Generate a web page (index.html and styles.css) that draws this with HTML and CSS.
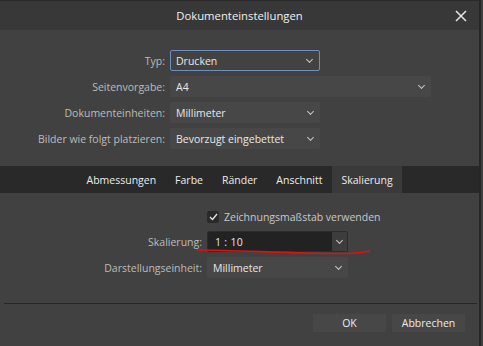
FILE: index.html
```html
<!DOCTYPE html>
<html lang="de">
<head>
  <meta charset="UTF-8" />
  <title>Dokumenteinstellungen</title>
  <link rel="stylesheet" href="styles.css">
</head>
<body>
  <div class="dialog">
    <div class="titlebar">
      <span class="title">Dokumenteinstellungen</span>
      <svg class="close" width="12" height="12" viewBox="0 0 12 12"><path d="M1 1L11 11M11 1L1 11" stroke="#e6e6e6" stroke-width="1.5"/></svg>
    </div>

    <div class="form top">
      <label>Typ:</label>
      <div class="field focus w150"><span>Drucken</span><i class="chev"></i></div>
      <label>Seitenvorgabe:</label>
      <div class="field w261"><span>A4</span><i class="chev"></i></div>
      <label>Dokumenteinheiten:</label>
      <div class="field w150"><span>Millimeter</span><i class="chev"></i></div>
      <label>Bilder wie folgt platzieren:</label>
      <div class="field w150"><span>Bevorzugt eingebettet</span><i class="chev"></i></div>
    </div>

    <div class="tabs">
      <span class="tab">Abmessungen</span>
      <span class="tab">Farbe</span>
      <span class="tab">Ränder</span>
      <span class="tab">Anschnitt</span>
      <span class="tab active">Skalierung</span>
    </div>

    <div class="form bottom">
      <span></span>
      <div class="check"><span class="box"><svg width="9" height="8" viewBox="0 0 9 8"><path d="M1 4L3.5 6.5L8 1" fill="none" stroke="#e6e6e6" stroke-width="1.3"/></svg></span>Zeichnungsmaßstab verwenden</div>
      <label>Skalierung:</label>
      <div class="field dark w141"><span class="scale">1 : 10</span><i class="btn"><i class="chev"></i></i></div>
      <label>Darstellungseinheit:</label>
      <div class="field w141"><span>Millimeter</span><i class="chev"></i></div>
      <svg class="redline" width="180" height="10" viewBox="0 0 180 10"><path d="M1 2C30 2 70 4 110 5S160 6 174 3" fill="none" stroke="#e01010" stroke-width="1.6"/></svg>
    </div>

    <div class="footer">
      <button class="button">OK</button>
      <button class="button">Abbrechen</button>
    </div>
  </div>
</body>
</html>
```

FILE: styles.css
```css
body {
  margin: 0;
  background: #404040;
  font-family: "Open Sans", "Noto Sans", sans-serif;
  font-size: 10.5px;
  color: #e8e8e8;
}

.dialog {
  width: 481px;
  height: 346px;
  background: #414141;
  border-right: 2px solid #262626;
  border-top: 1px solid #2a2a2a;
  box-sizing: border-box;
  position: relative;
}

.titlebar {
  height: 29px;
  background: #383838;
  display: flex;
  align-items: center;
  justify-content: center;
  position: relative;
}
.title {
  font-size: 11.3px;
  color: #f0f0f0;
}
.close {
  position: absolute;
  right: 12px;
  top: 9px;
}

.form {
  display: grid;
  align-items: center;
  row-gap: 5px;
  position: relative;
}
.form.top {
  grid-template-columns: 165px auto;
  column-gap: 5px;
  padding-top: 20px;
  height: 136px;
  box-sizing: border-box;
  align-content: start;
}
.form.bottom {
  grid-template-columns: 202px auto;
  column-gap: 5px;
  padding-top: 17px;
  height: 110px;
  box-sizing: border-box;
  align-content: start;
}
label {
  text-align: right;
  color: #bcbcbc;
}

.field {
  height: 21px;
  background: #474747;
  border-radius: 2px;
  display: flex;
  align-items: center;
  justify-content: space-between;
  padding: 0 6px;
  box-sizing: border-box;
  position: relative;
}
.field.focus {
  border: 1px solid #6f8fbf;
  background: #424242;
  padding: 0 6px 0 5px;
}
.w150 { width: 150px; }
.w261 { width: 261px; }
.w141 { width: 141px; }
.field.dark {
  background: #222222;
  border: 1px solid #2c2c2c;
  padding: 0 0 0 7px;
}
.scale { letter-spacing: 0.3px; }
.btn {
  width: 15px;
  height: 19px;
  background: #3d3d3d;
  display: flex;
  align-items: center;
  justify-content: center;
}

.chev {
  width: 4px;
  height: 4px;
  border-right: 1.2px solid #c8c8c8;
  border-bottom: 1.2px solid #c8c8c8;
  transform: rotate(45deg);
  margin-top: -3px;
  margin-right: 1px;
}
.btn .chev { margin-right: 0; }

.tabs {
  height: 27px;
  background: #292929;
  display: flex;
  align-items: stretch;
  padding-left: 77px;
}
.tab {
  display: flex;
  align-items: center;
  padding: 0 9.5px;
  color: #ececec;
}
.tab.active {
  background: #3a3a3a;
  margin-left: 0;
}

.check {
  display: flex;
  align-items: center;
  gap: 5px;
  color: #c8c8c8;
  height: 13px;
  margin-bottom: 3px;
}
.box {
  width: 12px;
  height: 12px;
  background: #2a2a2a;
  border-radius: 2px;
  display: flex;
  align-items: center;
  justify-content: center;
}

.redline {
  position: absolute;
  left: 196px;
  top: 55px;
}

.footer {
  margin: 0 2px 0 4px;
  border-top: 1px solid #262626;
  display: flex;
  justify-content: flex-end;
  gap: 6px;
  padding: 10px 12px 0 0;
}
.button {
  width: 73px;
  height: 18px;
  background: #474747;
  border: none;
  color: #ececec;
  font-family: inherit;
  font-size: 10.5px;
  padding: 0;
}
```
